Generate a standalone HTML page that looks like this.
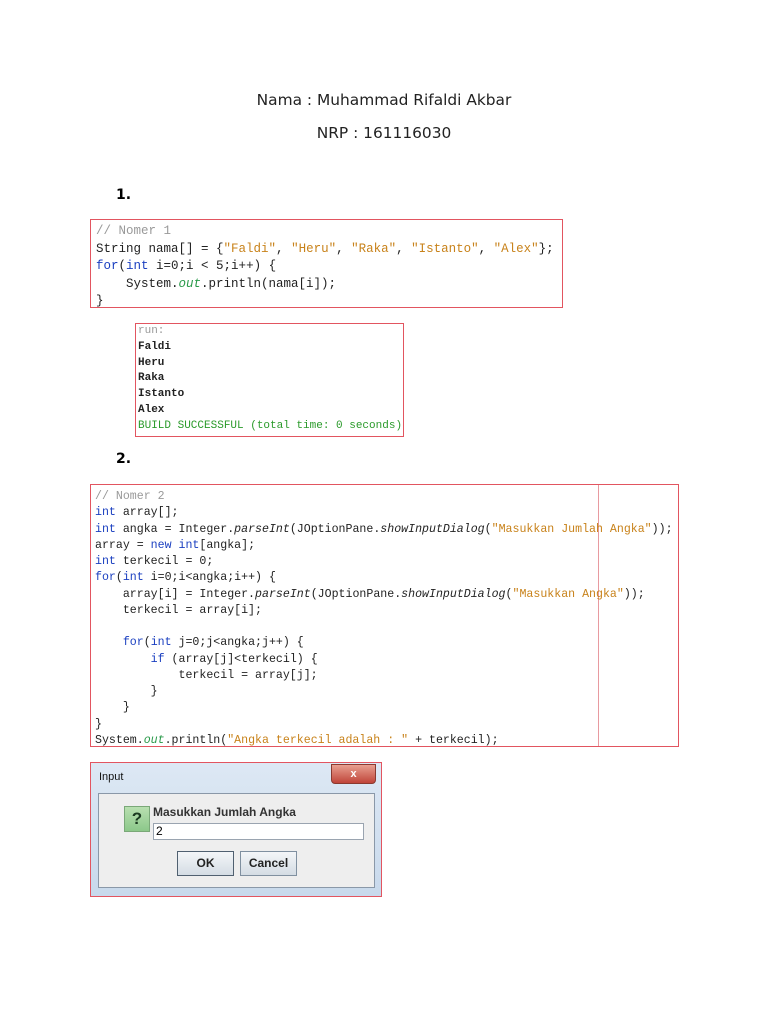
<!DOCTYPE html>
<html><head><meta charset="utf-8"><style>
body{margin:0;width:768px;height:1024px;background:#fff;position:relative;font-family:"Liberation Sans",sans-serif;overflow:hidden}
.a{position:absolute;white-space:pre}
.h{font-family:"DejaVu Sans",sans-serif;font-size:15.4px;color:#222;width:768px;text-align:center;left:0}
.code{font-family:"Liberation Mono",monospace;color:#222}
.k{color:#1a3fc0}.s{color:#c8821a}.c{color:#999}.o{color:#2a9a4a;font-style:italic}.i{font-style:italic}
.box{position:absolute;border:1.5px solid #e25560;box-sizing:border-box;background:#fff}
</style></head><body>
<div class="a h" style="top:91px">Nama : Muhammad Rifaldi Akbar</div>
<div class="a h" style="top:124px">NRP : 161116030</div>
<div class="a" style="left:116px;top:187px;font-family:'DejaVu Sans',sans-serif;font-weight:bold;font-size:14px">1.</div>
<div class="a" style="left:116px;top:451px;font-family:'DejaVu Sans',sans-serif;font-weight:bold;font-size:14px">2.</div>

<div class="box" style="left:90px;top:219px;width:473px;height:89px"></div>
<div class="a code" style="left:96px;top:223px;font-size:12.5px;line-height:17.6px"><span class="c">// Nomer 1</span>
String nama[] = {<span class="s">"Faldi"</span>, <span class="s">"Heru"</span>, <span class="s">"Raka"</span>, <span class="s">"Istanto"</span>, <span class="s">"Alex"</span>};
<span class="k">for</span>(<span class="k">int</span> i=0;i &lt; 5;i++) {
    System.<span class="o">out</span>.println(nama[i]);
}</div>

<div class="box" style="left:135px;top:323px;width:269px;height:114px"></div>
<div class="a code" style="left:138px;top:324px;font-size:11px;line-height:15.8px;font-weight:bold"><span class="c" style="font-weight:normal">run:</span>
Faldi
Heru
Raka
Istanto
Alex
<span style="color:#2a9a2a;font-weight:normal">BUILD SUCCESSFUL (total time: 0 seconds)</span></div>

<div class="box" style="left:90px;top:484px;width:589px;height:263px"></div>
<div style="position:absolute;left:598px;top:485px;width:1px;height:261px;background:#e89aa0"></div>
<div class="a code" style="left:95px;top:489px;font-size:11.6px;line-height:16.25px"><span class="c">// Nomer 2</span>
<span class="k">int</span> array[];
<span class="k">int</span> angka = Integer.<span class="i">parseInt</span>(JOptionPane.<span class="i">showInputDialog</span>(<span class="s">"Masukkan Jumlah Angka"</span>));
array = <span class="k">new</span> <span class="k">int</span>[angka];
<span class="k">int</span> terkecil = 0;
<span class="k">for</span>(<span class="k">int</span> i=0;i&lt;angka;i++) {
    array[i] = Integer.<span class="i">parseInt</span>(JOptionPane.<span class="i">showInputDialog</span>(<span class="s">"Masukkan Angka"</span>));
    terkecil = array[i];

    <span class="k">for</span>(<span class="k">int</span> j=0;j&lt;angka;j++) {
        <span class="k">if</span> (array[j]&lt;terkecil) {
            terkecil = array[j];
        }
    }
}
System.<span class="o">out</span>.println(<span class="s">"Angka terkecil adalah : "</span> + terkecil);</div>

<div class="box" style="left:90px;top:762px;width:292px;height:135px;background:linear-gradient(#dde8f4,#c8d9ec)"></div>
<div class="a" style="left:99px;top:771px;font-size:11px;color:#111">Input</div>
<div style="position:absolute;left:331px;top:764px;width:43px;height:18px;background:linear-gradient(#e8a090,#c0453a);border:1px solid #8a3a30;border-radius:0 0 4px 4px;color:#fff;font-size:11px;font-weight:bold;text-align:center;line-height:18px">x</div>
<div style="position:absolute;left:98px;top:793px;width:277px;height:95px;background:#eeeeee;border:1px solid #8a98a8;box-sizing:border-box"></div>
<div style="position:absolute;left:124px;top:806px;width:26px;height:26px;background:linear-gradient(#b8e0b0,#8cc88a);border:1px solid #7aa878;box-sizing:border-box;color:#1b3a20;font-weight:bold;font-size:17px;text-align:center;line-height:24px">?</div>
<div class="a" style="left:153px;top:805px;font-size:12px;font-weight:bold;color:#333">Masukkan Jumlah Angka</div>
<div style="position:absolute;left:153px;top:823px;width:211px;height:17px;background:#fff;border:1px solid #9aa4b0;box-sizing:border-box;font-size:12px;line-height:15px;padding-left:2px">2</div>
<div style="position:absolute;left:177px;top:851px;width:57px;height:25px;background:linear-gradient(#f4f6f8,#d4dce4);border:1.5px solid #506070;box-sizing:border-box;font-size:12px;font-weight:bold;text-align:center;line-height:22px;color:#222">OK</div>
<div style="position:absolute;left:240px;top:851px;width:57px;height:25px;background:linear-gradient(#f4f6f8,#d4dce4);border:1px solid #8090a0;box-sizing:border-box;font-size:12px;font-weight:bold;text-align:center;line-height:23px;color:#222">Cancel</div>
</body></html>
